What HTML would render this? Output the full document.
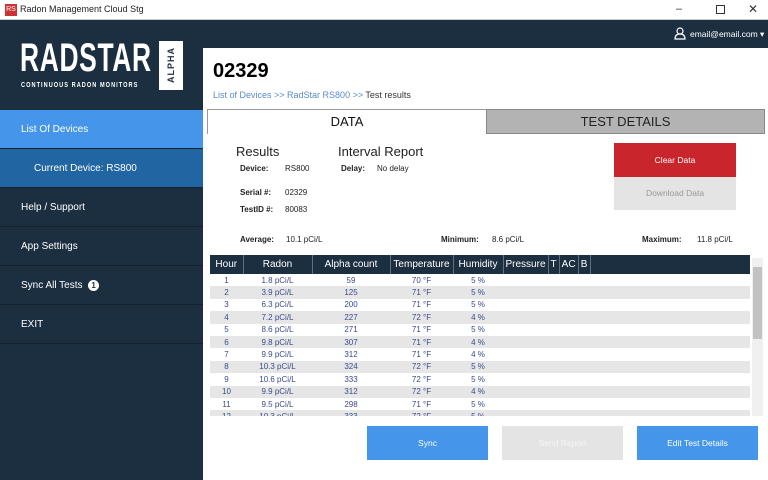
<!DOCTYPE html>
<html><head><style>
*{box-sizing:border-box;margin:0;padding:0}
body{width:768px;height:480px;overflow:hidden;background:#fff;font-family:"Liberation Sans",sans-serif;position:relative;font-size:9px;color:#222}
.a{position:absolute}
.side{left:0;top:20px;width:203px;height:460px;background:#1c2f41}
.mi{position:absolute;left:0;width:203px;height:39px;border-bottom:1px solid #14222f;color:#fff;font-size:10px;line-height:39px;padding-left:21px}
.tw{position:absolute;left:210px;top:255px;width:540px;height:161px;overflow:hidden}
table{border-collapse:collapse;width:540px;font-size:8px}
th{background:#1c2f41;color:#fff;font-weight:normal;font-size:10px;height:19px;border-right:1px solid #607080;padding:0 2px}
td{height:12.4px;text-align:center;color:#3a4a8a;padding:0}
tr:nth-child(odd) td{background:#e6e6e6}
.btn{position:absolute;top:426px;width:121px;height:34px;color:#fff;text-align:center;line-height:34px;font-size:8.5px}
.lbl{font-weight:bold;font-size:8px}
</style></head><body>
<div class="a" style="left:0;top:0;width:768px;height:20px;background:#fff;border-bottom:1px solid #ccc"></div>
<div class="a" style="left:5px;top:4px;width:12px;height:12px;background:#c33;color:#fff;font-size:7px;line-height:12px;text-align:center">RS</div>
<div class="a" style="left:20px;top:4px;font-size:9px;color:#222">Radon Management Cloud Stg</div>
<div class="a" style="left:676px;top:3px;font-size:11px;color:#333;white-space:nowrap">–</div>
<div class="a" style="left:716px;top:5px;width:9px;height:9px;border:1px solid #333"></div>
<div class="a" style="left:748px;top:2px;font-size:12px;color:#333">✕</div>
<div class="a side"></div>
<div class="a" style="left:203px;top:20px;width:565px;height:28px;background:#1c2f41"></div>
<svg class="a" style="left:674px;top:27px" width="12" height="13"><circle cx="6" cy="4" r="3" fill="none" stroke="#fff" stroke-width="1.2"/><path d="M1 12 Q1 7 6 7 Q11 7 11 12 Z" fill="none" stroke="#fff" stroke-width="1.2"/></svg>
<div class="a" style="left:690px;top:29px;color:#fff;font-size:8.5px;white-space:nowrap">email@email.com ▾</div>
<div class="a" style="left:20px;top:38px;color:#fff;font-size:40px;font-weight:bold;letter-spacing:1px;line-height:40px;transform:scaleX(0.66);transform-origin:left;white-space:nowrap">RADSTAR</div>
<div class="a" style="left:21px;top:82px;color:#fff;font-size:7px;font-weight:bold;letter-spacing:1.3px;transform:scaleX(0.8);transform-origin:left;white-space:nowrap">CONTINUOUS RADON MONITORS</div>
<div class="a" style="left:159px;top:41px;width:24px;height:49px;background:#fff"></div>
<div class="a" style="left:147px;top:60px;width:48px;color:#1c2f41;font-size:9px;font-weight:bold;transform:rotate(-90deg);text-align:center;letter-spacing:1px">ALPHA</div>
<div class="mi" style="top:110px;background:#4595ea">List Of Devices</div>
<div class="mi" style="top:149px;background:#2265a3;padding-left:34px">Current Device: RS800</div>
<div class="mi" style="top:188px">Help / Support</div>
<div class="mi" style="top:227px">App Settings</div>
<div class="mi" style="top:266px">Sync All Tests&nbsp; <span style="display:inline-block;width:11px;height:11px;border-radius:6px;background:#fff;color:#1c2f41;font-size:8px;line-height:11px;text-align:center;font-weight:bold">1</span></div>
<div class="mi" style="top:305px">EXIT</div>
<div class="a" style="left:213px;top:60px;font-size:20px;font-weight:bold;color:#000">02329</div>
<div class="a" style="left:213px;top:90px;font-size:9px;color:#5a8ac8">List of Devices &gt;&gt; RadStar RS800 &gt;&gt; <span style="color:#333">Test results</span></div>
<div class="a" style="left:207px;top:109px;width:280px;height:25px;border:1px solid #999;border-bottom:none;text-align:center;font-size:13px;line-height:24px;color:#111">DATA</div>
<div class="a" style="left:486px;top:109px;width:279px;height:25px;border:1px solid #888;background:#b3b3b3;text-align:center;font-size:13px;line-height:24px;color:#222">TEST DETAILS</div>
<div class="a" style="left:236px;top:144px;font-size:13px">Results</div>
<div class="a" style="left:338px;top:144px;font-size:13px">Interval Report</div>
<div class="a lbl" style="left:240px;top:164px">Device:</div><div class="a" style="left:285px;top:164px;font-size:8px">RS800</div>
<div class="a lbl" style="left:341px;top:164px">Delay:</div><div class="a" style="left:377px;top:164px;font-size:8px">No delay</div>
<div class="a lbl" style="left:240px;top:188px">Serial #:</div><div class="a" style="left:285px;top:188px;font-size:8px">02329</div>
<div class="a lbl" style="left:240px;top:205px">TestID #:</div><div class="a" style="left:285px;top:205px;font-size:8px">80083</div>
<div class="a lbl" style="left:240px;top:235px">Average:</div><div class="a" style="left:286px;top:235px;font-size:8px">10.1 pCi/L</div>
<div class="a lbl" style="left:441px;top:235px">Minimum:</div><div class="a" style="left:492px;top:235px;font-size:8px">8.6 pCi/L</div>
<div class="a lbl" style="left:642px;top:235px">Maximum:</div><div class="a" style="left:697px;top:235px;font-size:8px">11.8 pCi/L</div>
<div class="a" style="left:614px;top:143px;width:122px;height:34px;background:#c8252c;color:#fff;text-align:center;line-height:34px;font-size:8.5px">Clear Data</div>
<div class="a" style="left:614px;top:177px;width:122px;height:33px;background:#e4e4e4;color:#999;text-align:center;line-height:33px;font-size:8.5px">Download Data</div>
<div class="tw"><table>
<tr><th style="width:33px">Hour</th><th style="width:69px">Radon</th><th style="width:78px">Alpha count</th><th style="width:63px">Temperature</th><th style="width:50px">Humidity</th><th style="width:43px">Pressure</th><th style="width:11px">T</th><th style="width:19px">AC</th><th style="width:12px">B</th><th style="border:none"></th></tr>
<tr><td>1</td><td>1.8 pCi/L</td><td>59</td><td>70 °F</td><td>5 %</td><td colspan=5></td></tr>
<tr><td>2</td><td>3.9 pCi/L</td><td>125</td><td>71 °F</td><td>5 %</td><td colspan=5></td></tr>
<tr><td>3</td><td>6.3 pCi/L</td><td>200</td><td>71 °F</td><td>5 %</td><td colspan=5></td></tr>
<tr><td>4</td><td>7.2 pCi/L</td><td>227</td><td>72 °F</td><td>4 %</td><td colspan=5></td></tr>
<tr><td>5</td><td>8.6 pCi/L</td><td>271</td><td>71 °F</td><td>5 %</td><td colspan=5></td></tr>
<tr><td>6</td><td>9.8 pCi/L</td><td>307</td><td>71 °F</td><td>4 %</td><td colspan=5></td></tr>
<tr><td>7</td><td>9.9 pCi/L</td><td>312</td><td>71 °F</td><td>4 %</td><td colspan=5></td></tr>
<tr><td>8</td><td>10.3 pCi/L</td><td>324</td><td>72 °F</td><td>5 %</td><td colspan=5></td></tr>
<tr><td>9</td><td>10.6 pCi/L</td><td>333</td><td>72 °F</td><td>5 %</td><td colspan=5></td></tr>
<tr><td>10</td><td>9.9 pCi/L</td><td>312</td><td>72 °F</td><td>4 %</td><td colspan=5></td></tr>
<tr><td>11</td><td>9.5 pCi/L</td><td>298</td><td>71 °F</td><td>5 %</td><td colspan=5></td></tr>
<tr><td>12</td><td>10.3 pCi/L</td><td>333</td><td>72 °F</td><td>5 %</td><td colspan=5></td></tr>
</table></div>
<div class="a" style="left:752px;top:258px;width:11px;height:158px;background:#f0f0f0"></div>
<div class="a" style="left:753px;top:267px;width:9px;height:72px;background:#c2c2c2"></div>
<div class="btn" style="left:367px;background:#4595ea">Sync</div>
<div class="btn" style="left:502px;background:#e4e4e4;color:#f6f6f6">Send Report</div>
<div class="btn" style="left:637px;background:#4595ea">Edit Test Details</div>
</body></html>
